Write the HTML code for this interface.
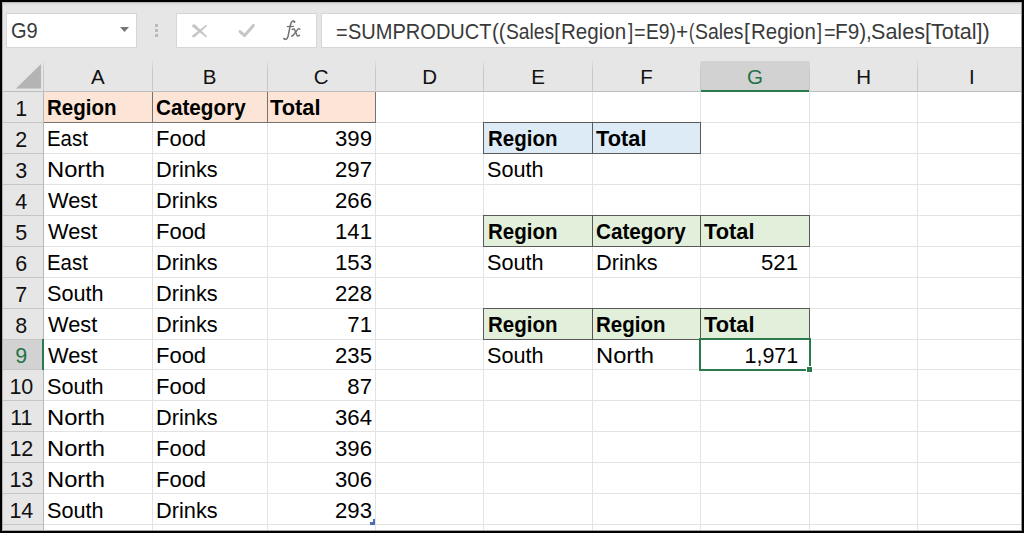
<!DOCTYPE html>
<html><head><meta charset="utf-8"><style>
html,body{margin:0;padding:0;}
body{width:1024px;height:533px;background:#000;position:relative;overflow:hidden;font-family:"Liberation Sans",sans-serif;}
.r{position:absolute;}
.t{position:absolute;white-space:nowrap;}
</style></head><body>
<div class="r" style="left:2.00px;top:2.00px;width:1020.00px;height:528.50px;background:#ffffff;"></div>
<div class="r" style="left:2.00px;top:2.00px;width:1020.00px;height:59.00px;background:#e6e6e6;"></div>
<div class="r" style="left:2.00px;top:3.00px;width:1020.00px;height:1.00px;background:#d9d9d9;"></div>
<div class="r" style="left:2.00px;top:4.00px;width:1020.00px;height:2.00px;background:#e1e1e1;"></div>
<div class="r" style="left:6.00px;top:13.00px;width:131.00px;height:34.50px;background:#ffffff;box-shadow:inset 0 0 0 1px #d6d6d6;"></div>
<div class="t" style="left:11.30px;top:16.38px;font-size:22px;line-height:30px;color:#3a3a3a;transform:scaleX(0.91);transform-origin:0 0;">G9</div>
<svg class="r" style="left:118px;top:25px" width="14" height="9"><polygon points="2,2 11,2 6.5,7" fill="#767676"/></svg>
<div class="r" style="left:155.00px;top:24.00px;width:2.50px;height:2.50px;background:#bababa;"></div>
<div class="r" style="left:155.00px;top:29.00px;width:2.50px;height:2.50px;background:#bababa;"></div>
<div class="r" style="left:155.00px;top:34.00px;width:2.50px;height:2.50px;background:#bababa;"></div>
<div class="r" style="left:176.00px;top:13.00px;width:140.50px;height:34.50px;background:#ffffff;box-shadow:inset 0 0 0 1px #d6d6d6;"></div>
<svg class="r" style="left:190px;top:22px" width="20" height="18"><path d="M1.8,4.2 Q2.8,1.6 5.0,2.6 L17.0,14.2 Q17.0,15.4 15.8,15.2 Z" fill="#c6c6c6"/><path d="M15.8,2.9 Q17.0,2.8 17.0,4.0 L5.2,14.8 Q2.6,16.4 1.9,13.8 Z" fill="#c6c6c6"/></svg>
<svg class="r" style="left:236px;top:22px" width="22" height="18"><path d="M4,9.6 L8.6,13.6 L17.4,3.4" stroke="#c6c6c6" stroke-width="3" stroke-linecap="round" stroke-linejoin="round" fill="none"/></svg>
<svg class="r" style="left:276px;top:16px" width="30" height="28"><g fill="none" stroke="#6e6e6e" stroke-linecap="round"><path d="M18.6,6.0 C18.3,5.0 17.3,4.8 16.5,5.2 C15.3,5.8 14.8,7.4 14.4,9.2 L12.0,20.4 C11.5,22.5 10.6,23.4 9.4,23.4 C8.7,23.4 8.3,23.1 8.1,22.7" stroke-width="1.5"/><path d="M11.3,10.6 L17.4,10.4" stroke-width="1.2"/><path d="M16.2,13.4 C17.3,12.6 18.4,12.9 19.0,14.4 L20.8,19.0 C21.3,20.2 22.3,20.4 23.5,19.3" stroke-width="1.4"/><path d="M23.9,13.2 C23.4,12.4 22.5,12.5 21.8,13.3 L17.4,19.0 C16.8,19.8 16.1,20.3 15.5,19.9" stroke-width="1.3"/></g><circle cx="18.4" cy="5.9" r="0.9" fill="#6e6e6e"/><circle cx="8.2" cy="22.6" r="0.9" fill="#6e6e6e"/></svg>
<div class="r" style="left:320.50px;top:13.00px;width:701.50px;height:34.50px;background:#ffffff;box-sizing:border-box;border:1px solid #d6d6d6;border-right:none;"></div>
<div class="t" style="left:336.19px;top:18.25px;font-size:21.8px;line-height:30px;color:#3a3a3a;transform:scaleX(0.9091);transform-origin:0 0;">=</div>
<div class="t" style="left:347.68px;top:17.25px;font-size:21.8px;line-height:30px;color:#3a3a3a;transform:scaleX(0.9187);transform-origin:0 0;">SUMPRODUCT</div>
<div class="t" style="left:491.97px;top:17.25px;font-size:21.8px;line-height:30px;color:#3a3a3a;transform:scaleX(0.9308);transform-origin:0 0;">((</div>
<div class="t" style="left:505.72px;top:17.25px;font-size:21.8px;line-height:30px;color:#3a3a3a;transform:scaleX(0.8830);transform-origin:0 0;">Sales</div>
<div class="t" style="left:554.15px;top:17.25px;font-size:21.8px;line-height:30px;color:#3a3a3a;transform:scaleX(0.9750);transform-origin:0 0;">[</div>
<div class="t" style="left:561.01px;top:17.25px;font-size:21.8px;line-height:30px;color:#3a3a3a;transform:scaleX(0.9439);transform-origin:0 0;">Region</div>
<div class="t" style="left:627.60px;top:17.25px;font-size:21.8px;line-height:30px;color:#3a3a3a;transform:scaleX(0.8600);transform-origin:0 0;">]</div>
<div class="t" style="left:633.99px;top:18.25px;font-size:21.8px;line-height:30px;color:#3a3a3a;transform:scaleX(0.9091);transform-origin:0 0;">=</div>
<div class="t" style="left:645.84px;top:17.25px;font-size:21.8px;line-height:30px;color:#3a3a3a;transform:scaleX(0.8806);transform-origin:0 0;">E9)</div>
<div class="t" style="left:676.15px;top:17.25px;font-size:21.8px;line-height:30px;color:#3a3a3a;transform:scaleX(0.9545);transform-origin:0 0;">+</div>
<div class="t" style="left:689.07px;top:17.25px;font-size:21.8px;line-height:30px;color:#3a3a3a;transform:scaleX(0.7333);transform-origin:0 0;">(</div>
<div class="t" style="left:695.31px;top:17.25px;font-size:21.8px;line-height:30px;color:#3a3a3a;transform:scaleX(0.8906);transform-origin:0 0;">Sales</div>
<div class="t" style="left:743.95px;top:17.25px;font-size:21.8px;line-height:30px;color:#3a3a3a;transform:scaleX(0.9750);transform-origin:0 0;">[</div>
<div class="t" style="left:750.82px;top:17.25px;font-size:21.8px;line-height:30px;color:#3a3a3a;transform:scaleX(0.9379);transform-origin:0 0;">Region</div>
<div class="t" style="left:817.40px;top:17.25px;font-size:21.8px;line-height:30px;color:#3a3a3a;transform:scaleX(0.8200);transform-origin:0 0;">]</div>
<div class="t" style="left:823.99px;top:18.25px;font-size:21.8px;line-height:30px;color:#3a3a3a;transform:scaleX(0.9091);transform-origin:0 0;">=</div>
<div class="t" style="left:835.20px;top:17.25px;font-size:21.8px;line-height:30px;color:#3a3a3a;transform:scaleX(0.9514);transform-origin:0 0;">F9),</div>
<div class="t" style="left:871.31px;top:17.25px;font-size:21.8px;line-height:30px;color:#3a3a3a;transform:scaleX(0.9890);transform-origin:0 0;">Sales[Total])</div>
<div class="r" style="left:2.00px;top:61.00px;width:1020.00px;height:30.50px;background:#e6e6e6;"></div>
<div class="r" style="left:2.00px;top:91.50px;width:41.50px;height:439.00px;background:#e6e6e6;"></div>
<div class="r" style="left:700.70px;top:61.00px;width:108.80px;height:30.50px;background:#d2d2d2;"></div>
<div class="r" style="left:2.00px;top:339.02px;width:41.50px;height:30.94px;background:#d2d2d2;"></div>
<svg class="r" style="left:0;top:0" width="60" height="100"><polygon points="16,88.5 41,64 41,88.5" fill="#b4b4b4"/></svg>
<div class="r" style="left:43.50px;top:91.50px;width:332.00px;height:30.94px;background:#fce4d6;"></div>
<div class="r" style="left:483.70px;top:122.44px;width:217.00px;height:30.94px;background:#ddebf7;"></div>
<div class="r" style="left:483.70px;top:215.26px;width:325.80px;height:30.94px;background:#e2efda;"></div>
<div class="r" style="left:483.70px;top:308.08px;width:325.80px;height:30.94px;background:#e2efda;"></div>
<div class="r" style="left:44.00px;top:121.94px;width:978.00px;height:1.00px;background:#e3e3e3;"></div>
<div class="r" style="left:44.00px;top:152.88px;width:978.00px;height:1.00px;background:#e3e3e3;"></div>
<div class="r" style="left:44.00px;top:183.82px;width:978.00px;height:1.00px;background:#e3e3e3;"></div>
<div class="r" style="left:44.00px;top:214.76px;width:978.00px;height:1.00px;background:#e3e3e3;"></div>
<div class="r" style="left:44.00px;top:245.70px;width:978.00px;height:1.00px;background:#e3e3e3;"></div>
<div class="r" style="left:44.00px;top:276.64px;width:978.00px;height:1.00px;background:#e3e3e3;"></div>
<div class="r" style="left:44.00px;top:307.58px;width:978.00px;height:1.00px;background:#e3e3e3;"></div>
<div class="r" style="left:44.00px;top:338.52px;width:978.00px;height:1.00px;background:#e3e3e3;"></div>
<div class="r" style="left:44.00px;top:369.46px;width:978.00px;height:1.00px;background:#e3e3e3;"></div>
<div class="r" style="left:44.00px;top:400.40px;width:978.00px;height:1.00px;background:#e3e3e3;"></div>
<div class="r" style="left:44.00px;top:431.34px;width:978.00px;height:1.00px;background:#e3e3e3;"></div>
<div class="r" style="left:44.00px;top:462.28px;width:978.00px;height:1.00px;background:#e3e3e3;"></div>
<div class="r" style="left:44.00px;top:493.22px;width:978.00px;height:1.00px;background:#e3e3e3;"></div>
<div class="r" style="left:44.00px;top:524.16px;width:978.00px;height:1.00px;background:#e3e3e3;"></div>
<div class="r" style="left:151.70px;top:91.50px;width:1.00px;height:439.00px;background:#e3e3e3;"></div>
<div class="r" style="left:266.50px;top:91.50px;width:1.00px;height:439.00px;background:#e3e3e3;"></div>
<div class="r" style="left:375.00px;top:91.50px;width:1.00px;height:439.00px;background:#e3e3e3;"></div>
<div class="r" style="left:483.20px;top:91.50px;width:1.00px;height:439.00px;background:#e3e3e3;"></div>
<div class="r" style="left:592.00px;top:91.50px;width:1.00px;height:439.00px;background:#e3e3e3;"></div>
<div class="r" style="left:700.20px;top:91.50px;width:1.00px;height:439.00px;background:#e3e3e3;"></div>
<div class="r" style="left:809.00px;top:91.50px;width:1.00px;height:439.00px;background:#e3e3e3;"></div>
<div class="r" style="left:917.10px;top:91.50px;width:1.00px;height:439.00px;background:#e3e3e3;"></div>
<div class="r" style="left:2.00px;top:121.94px;width:41.50px;height:1.00px;background:#c6c6c6;"></div>
<div class="r" style="left:2.00px;top:152.88px;width:41.50px;height:1.00px;background:#c6c6c6;"></div>
<div class="r" style="left:2.00px;top:183.82px;width:41.50px;height:1.00px;background:#c6c6c6;"></div>
<div class="r" style="left:2.00px;top:214.76px;width:41.50px;height:1.00px;background:#c6c6c6;"></div>
<div class="r" style="left:2.00px;top:245.70px;width:41.50px;height:1.00px;background:#c6c6c6;"></div>
<div class="r" style="left:2.00px;top:276.64px;width:41.50px;height:1.00px;background:#c6c6c6;"></div>
<div class="r" style="left:2.00px;top:307.58px;width:41.50px;height:1.00px;background:#c6c6c6;"></div>
<div class="r" style="left:2.00px;top:338.52px;width:41.50px;height:1.00px;background:#c6c6c6;"></div>
<div class="r" style="left:2.00px;top:369.46px;width:41.50px;height:1.00px;background:#c6c6c6;"></div>
<div class="r" style="left:2.00px;top:400.40px;width:41.50px;height:1.00px;background:#c6c6c6;"></div>
<div class="r" style="left:2.00px;top:431.34px;width:41.50px;height:1.00px;background:#c6c6c6;"></div>
<div class="r" style="left:2.00px;top:462.28px;width:41.50px;height:1.00px;background:#c6c6c6;"></div>
<div class="r" style="left:2.00px;top:493.22px;width:41.50px;height:1.00px;background:#c6c6c6;"></div>
<div class="r" style="left:2.00px;top:524.16px;width:41.50px;height:1.00px;background:#c6c6c6;"></div>
<div class="r" style="left:2.00px;top:91.00px;width:1020.00px;height:1.00px;background:#bdbdbd;"></div>
<div class="r" style="left:43.00px;top:61.00px;width:1.00px;height:30.50px;background:linear-gradient(rgba(200,200,200,0.3),#c8c8c8 35%);"></div>
<div class="r" style="left:151.70px;top:61.00px;width:1.00px;height:30.50px;background:linear-gradient(rgba(200,200,200,0.3),#c8c8c8 35%);"></div>
<div class="r" style="left:266.50px;top:61.00px;width:1.00px;height:30.50px;background:linear-gradient(rgba(200,200,200,0.3),#c8c8c8 35%);"></div>
<div class="r" style="left:375.00px;top:61.00px;width:1.00px;height:30.50px;background:linear-gradient(rgba(200,200,200,0.3),#c8c8c8 35%);"></div>
<div class="r" style="left:483.20px;top:61.00px;width:1.00px;height:30.50px;background:linear-gradient(rgba(200,200,200,0.3),#c8c8c8 35%);"></div>
<div class="r" style="left:592.00px;top:61.00px;width:1.00px;height:30.50px;background:linear-gradient(rgba(200,200,200,0.3),#c8c8c8 35%);"></div>
<div class="r" style="left:700.20px;top:61.00px;width:1.00px;height:30.50px;background:linear-gradient(rgba(200,200,200,0.3),#c8c8c8 35%);"></div>
<div class="r" style="left:809.00px;top:61.00px;width:1.00px;height:30.50px;background:linear-gradient(rgba(200,200,200,0.3),#c8c8c8 35%);"></div>
<div class="r" style="left:917.10px;top:61.00px;width:1.00px;height:30.50px;background:linear-gradient(rgba(200,200,200,0.3),#c8c8c8 35%);"></div>
<div class="r" style="left:43.00px;top:91.50px;width:1.00px;height:439.00px;background:#b8b8b8;"></div>
<div class="r" style="left:700.70px;top:90.30px;width:108.80px;height:2.00px;background:#2a7a4b;"></div>
<div class="r" style="left:42.00px;top:339.02px;width:2.00px;height:30.94px;background:#2a7a4b;"></div>
<div class="r" style="left:44.00px;top:121.94px;width:332.00px;height:1.00px;background:#767171;"></div>
<div class="r" style="left:151.70px;top:91.50px;width:1.00px;height:30.94px;background:#767171;"></div>
<div class="r" style="left:266.50px;top:91.50px;width:1.00px;height:30.94px;background:#767171;"></div>
<div class="r" style="left:375.00px;top:91.50px;width:1.00px;height:30.94px;background:#767171;"></div>
<div class="r" style="left:483.20px;top:121.94px;width:218.00px;height:1.00px;background:#595959;"></div>
<div class="r" style="left:483.20px;top:152.88px;width:218.00px;height:1.00px;background:#595959;"></div>
<div class="r" style="left:483.20px;top:122.44px;width:1.00px;height:30.94px;background:#595959;"></div>
<div class="r" style="left:592.00px;top:122.44px;width:1.00px;height:30.94px;background:#595959;"></div>
<div class="r" style="left:700.20px;top:122.44px;width:1.00px;height:30.94px;background:#595959;"></div>
<div class="r" style="left:483.20px;top:214.76px;width:326.80px;height:1.00px;background:#595959;"></div>
<div class="r" style="left:483.20px;top:245.70px;width:326.80px;height:1.00px;background:#595959;"></div>
<div class="r" style="left:483.20px;top:215.26px;width:1.00px;height:30.94px;background:#595959;"></div>
<div class="r" style="left:592.00px;top:215.26px;width:1.00px;height:30.94px;background:#595959;"></div>
<div class="r" style="left:700.20px;top:215.26px;width:1.00px;height:30.94px;background:#595959;"></div>
<div class="r" style="left:809.00px;top:215.26px;width:1.00px;height:30.94px;background:#595959;"></div>
<div class="r" style="left:483.20px;top:307.58px;width:326.80px;height:1.00px;background:#595959;"></div>
<div class="r" style="left:483.20px;top:338.52px;width:326.80px;height:1.00px;background:#595959;"></div>
<div class="r" style="left:483.20px;top:308.08px;width:1.00px;height:30.94px;background:#595959;"></div>
<div class="r" style="left:592.00px;top:308.08px;width:1.00px;height:30.94px;background:#595959;"></div>
<div class="r" style="left:700.20px;top:308.08px;width:1.00px;height:30.94px;background:#595959;"></div>
<div class="r" style="left:809.00px;top:308.08px;width:1.00px;height:30.94px;background:#595959;"></div>
<div class="t" style="left:43.50px;top:61.90px;font-size:20.5px;line-height:30px;color:#111111;width:108.70px;text-align:center;">A</div>
<div class="t" style="left:152.20px;top:61.90px;font-size:20.5px;line-height:30px;color:#111111;width:114.80px;text-align:center;">B</div>
<div class="t" style="left:267.00px;top:61.90px;font-size:20.5px;line-height:30px;color:#111111;width:108.50px;text-align:center;">C</div>
<div class="t" style="left:375.50px;top:61.90px;font-size:20.5px;line-height:30px;color:#111111;width:108.20px;text-align:center;">D</div>
<div class="t" style="left:483.70px;top:61.90px;font-size:20.5px;line-height:30px;color:#111111;width:108.80px;text-align:center;">E</div>
<div class="t" style="left:592.50px;top:61.90px;font-size:20.5px;line-height:30px;color:#111111;width:108.20px;text-align:center;">F</div>
<div class="t" style="left:700.70px;top:61.90px;font-size:20.5px;line-height:30px;color:#217346;width:108.80px;text-align:center;">G</div>
<div class="t" style="left:809.50px;top:61.90px;font-size:20.5px;line-height:30px;color:#111111;width:108.10px;text-align:center;">H</div>
<div class="t" style="left:917.60px;top:61.90px;font-size:20.5px;line-height:30px;color:#111111;width:108.60px;text-align:center;">I</div>
<div class="t" style="left:0.60px;top:93.95px;font-size:21.5px;line-height:30px;color:#111111;width:41.50px;text-align:center;">1</div>
<div class="t" style="left:0.60px;top:124.89px;font-size:21.5px;line-height:30px;color:#111111;width:41.50px;text-align:center;">2</div>
<div class="t" style="left:0.60px;top:155.83px;font-size:21.5px;line-height:30px;color:#111111;width:41.50px;text-align:center;">3</div>
<div class="t" style="left:0.60px;top:186.77px;font-size:21.5px;line-height:30px;color:#111111;width:41.50px;text-align:center;">4</div>
<div class="t" style="left:0.60px;top:217.71px;font-size:21.5px;line-height:30px;color:#111111;width:41.50px;text-align:center;">5</div>
<div class="t" style="left:0.60px;top:248.65px;font-size:21.5px;line-height:30px;color:#111111;width:41.50px;text-align:center;">6</div>
<div class="t" style="left:0.60px;top:279.59px;font-size:21.5px;line-height:30px;color:#111111;width:41.50px;text-align:center;">7</div>
<div class="t" style="left:0.60px;top:310.53px;font-size:21.5px;line-height:30px;color:#111111;width:41.50px;text-align:center;">8</div>
<div class="t" style="left:0.60px;top:341.47px;font-size:21.5px;line-height:30px;color:#217346;width:41.50px;text-align:center;">9</div>
<div class="t" style="left:0.60px;top:372.41px;font-size:21.5px;line-height:30px;color:#111111;width:41.50px;text-align:center;">10</div>
<div class="t" style="left:0.60px;top:403.35px;font-size:21.5px;line-height:30px;color:#111111;width:41.50px;text-align:center;">11</div>
<div class="t" style="left:0.60px;top:434.29px;font-size:21.5px;line-height:30px;color:#111111;width:41.50px;text-align:center;">12</div>
<div class="t" style="left:0.60px;top:465.23px;font-size:21.5px;line-height:30px;color:#111111;width:41.50px;text-align:center;">13</div>
<div class="t" style="left:0.60px;top:496.17px;font-size:21.5px;line-height:30px;color:#111111;width:41.50px;text-align:center;">14</div>
<div class="t" style="left:47.32px;top:93.47px;font-size:21.6px;line-height:30px;color:#000;font-weight:bold;transform:scaleX(0.9497);transform-origin:0 0;">Region</div>
<div class="t" style="left:156.01px;top:93.47px;font-size:21.6px;line-height:30px;color:#000;font-weight:bold;transform:scaleX(0.9582);transform-origin:0 0;">Category</div>
<div class="t" style="left:270.40px;top:93.47px;font-size:21.6px;line-height:30px;color:#000;font-weight:bold;transform:scaleX(1.0095);transform-origin:0 0;">Total</div>
<div class="t" style="left:47.16px;top:124.41px;font-size:21.6px;line-height:30px;color:#000;transform:scaleX(0.9455);transform-origin:0 0;">East</div>
<div class="t" style="left:155.71px;top:124.41px;font-size:21.6px;line-height:30px;color:#000;transform:scaleX(1.0176);transform-origin:0 0;">Food</div>
<div class="t" style="left:172.10px;top:124.44px;font-size:21.5px;line-height:30px;color:#000;width:200.00px;text-align:right;transform:scaleX(1.03);transform-origin:100% 0;">399</div>
<div class="t" style="left:46.84px;top:155.35px;font-size:21.6px;line-height:30px;color:#000;transform:scaleX(1.0998);transform-origin:0 0;">North</div>
<div class="t" style="left:155.73px;top:155.35px;font-size:21.6px;line-height:30px;color:#000;transform:scaleX(1.0080);transform-origin:0 0;">Drinks</div>
<div class="t" style="left:172.10px;top:155.38px;font-size:21.5px;line-height:30px;color:#000;width:200.00px;text-align:right;transform:scaleX(1.03);transform-origin:100% 0;">297</div>
<div class="t" style="left:48.10px;top:186.29px;font-size:21.6px;line-height:30px;color:#000;transform:scaleX(1.0095);transform-origin:0 0;">West</div>
<div class="t" style="left:155.73px;top:186.29px;font-size:21.6px;line-height:30px;color:#000;transform:scaleX(1.0080);transform-origin:0 0;">Drinks</div>
<div class="t" style="left:172.10px;top:186.32px;font-size:21.5px;line-height:30px;color:#000;width:200.00px;text-align:right;transform:scaleX(1.03);transform-origin:100% 0;">266</div>
<div class="t" style="left:48.10px;top:217.23px;font-size:21.6px;line-height:30px;color:#000;transform:scaleX(1.0095);transform-origin:0 0;">West</div>
<div class="t" style="left:155.71px;top:217.23px;font-size:21.6px;line-height:30px;color:#000;transform:scaleX(1.0176);transform-origin:0 0;">Food</div>
<div class="t" style="left:172.10px;top:217.26px;font-size:21.5px;line-height:30px;color:#000;width:200.00px;text-align:right;transform:scaleX(1.03);transform-origin:100% 0;">141</div>
<div class="t" style="left:47.16px;top:248.17px;font-size:21.6px;line-height:30px;color:#000;transform:scaleX(0.9455);transform-origin:0 0;">East</div>
<div class="t" style="left:155.73px;top:248.17px;font-size:21.6px;line-height:30px;color:#000;transform:scaleX(1.0080);transform-origin:0 0;">Drinks</div>
<div class="t" style="left:172.10px;top:248.20px;font-size:21.5px;line-height:30px;color:#000;width:200.00px;text-align:right;transform:scaleX(1.03);transform-origin:100% 0;">153</div>
<div class="t" style="left:46.77px;top:279.11px;font-size:21.6px;line-height:30px;color:#000;transform:scaleX(1.0034);transform-origin:0 0;">South</div>
<div class="t" style="left:155.73px;top:279.11px;font-size:21.6px;line-height:30px;color:#000;transform:scaleX(1.0080);transform-origin:0 0;">Drinks</div>
<div class="t" style="left:172.10px;top:279.14px;font-size:21.5px;line-height:30px;color:#000;width:200.00px;text-align:right;transform:scaleX(1.03);transform-origin:100% 0;">228</div>
<div class="t" style="left:48.10px;top:310.05px;font-size:21.6px;line-height:30px;color:#000;transform:scaleX(1.0095);transform-origin:0 0;">West</div>
<div class="t" style="left:155.73px;top:310.05px;font-size:21.6px;line-height:30px;color:#000;transform:scaleX(1.0080);transform-origin:0 0;">Drinks</div>
<div class="t" style="left:172.10px;top:310.08px;font-size:21.5px;line-height:30px;color:#000;width:200.00px;text-align:right;transform:scaleX(1.03);transform-origin:100% 0;">71</div>
<div class="t" style="left:48.10px;top:340.99px;font-size:21.6px;line-height:30px;color:#000;transform:scaleX(1.0095);transform-origin:0 0;">West</div>
<div class="t" style="left:155.71px;top:340.99px;font-size:21.6px;line-height:30px;color:#000;transform:scaleX(1.0176);transform-origin:0 0;">Food</div>
<div class="t" style="left:172.10px;top:341.02px;font-size:21.5px;line-height:30px;color:#000;width:200.00px;text-align:right;transform:scaleX(1.03);transform-origin:100% 0;">235</div>
<div class="t" style="left:46.77px;top:371.93px;font-size:21.6px;line-height:30px;color:#000;transform:scaleX(1.0034);transform-origin:0 0;">South</div>
<div class="t" style="left:155.71px;top:371.93px;font-size:21.6px;line-height:30px;color:#000;transform:scaleX(1.0176);transform-origin:0 0;">Food</div>
<div class="t" style="left:172.10px;top:371.96px;font-size:21.5px;line-height:30px;color:#000;width:200.00px;text-align:right;transform:scaleX(1.03);transform-origin:100% 0;">87</div>
<div class="t" style="left:46.84px;top:402.87px;font-size:21.6px;line-height:30px;color:#000;transform:scaleX(1.0998);transform-origin:0 0;">North</div>
<div class="t" style="left:155.73px;top:402.87px;font-size:21.6px;line-height:30px;color:#000;transform:scaleX(1.0080);transform-origin:0 0;">Drinks</div>
<div class="t" style="left:172.10px;top:402.90px;font-size:21.5px;line-height:30px;color:#000;width:200.00px;text-align:right;transform:scaleX(1.03);transform-origin:100% 0;">364</div>
<div class="t" style="left:46.84px;top:433.81px;font-size:21.6px;line-height:30px;color:#000;transform:scaleX(1.0998);transform-origin:0 0;">North</div>
<div class="t" style="left:155.71px;top:433.81px;font-size:21.6px;line-height:30px;color:#000;transform:scaleX(1.0176);transform-origin:0 0;">Food</div>
<div class="t" style="left:172.10px;top:433.84px;font-size:21.5px;line-height:30px;color:#000;width:200.00px;text-align:right;transform:scaleX(1.03);transform-origin:100% 0;">396</div>
<div class="t" style="left:46.84px;top:464.75px;font-size:21.6px;line-height:30px;color:#000;transform:scaleX(1.0998);transform-origin:0 0;">North</div>
<div class="t" style="left:155.71px;top:464.75px;font-size:21.6px;line-height:30px;color:#000;transform:scaleX(1.0176);transform-origin:0 0;">Food</div>
<div class="t" style="left:172.10px;top:464.78px;font-size:21.5px;line-height:30px;color:#000;width:200.00px;text-align:right;transform:scaleX(1.03);transform-origin:100% 0;">306</div>
<div class="t" style="left:46.77px;top:495.69px;font-size:21.6px;line-height:30px;color:#000;transform:scaleX(1.0034);transform-origin:0 0;">South</div>
<div class="t" style="left:155.73px;top:495.69px;font-size:21.6px;line-height:30px;color:#000;transform:scaleX(1.0080);transform-origin:0 0;">Drinks</div>
<div class="t" style="left:172.10px;top:495.72px;font-size:21.5px;line-height:30px;color:#000;width:200.00px;text-align:right;transform:scaleX(1.03);transform-origin:100% 0;">293</div>
<div class="t" style="left:487.52px;top:124.41px;font-size:21.6px;line-height:30px;color:#000;font-weight:bold;transform:scaleX(0.9497);transform-origin:0 0;">Region</div>
<div class="t" style="left:595.90px;top:124.41px;font-size:21.6px;line-height:30px;color:#000;font-weight:bold;transform:scaleX(1.0095);transform-origin:0 0;">Total</div>
<div class="t" style="left:486.97px;top:155.35px;font-size:21.6px;line-height:30px;color:#000;transform:scaleX(1.0034);transform-origin:0 0;">South</div>
<div class="t" style="left:487.52px;top:217.23px;font-size:21.6px;line-height:30px;color:#000;font-weight:bold;transform:scaleX(0.9497);transform-origin:0 0;">Region</div>
<div class="t" style="left:596.31px;top:217.23px;font-size:21.6px;line-height:30px;color:#000;font-weight:bold;transform:scaleX(0.9582);transform-origin:0 0;">Category</div>
<div class="t" style="left:704.10px;top:217.23px;font-size:21.6px;line-height:30px;color:#000;font-weight:bold;transform:scaleX(1.0095);transform-origin:0 0;">Total</div>
<div class="t" style="left:486.97px;top:248.17px;font-size:21.6px;line-height:30px;color:#000;transform:scaleX(1.0034);transform-origin:0 0;">South</div>
<div class="t" style="left:596.03px;top:248.17px;font-size:21.6px;line-height:30px;color:#000;transform:scaleX(1.0080);transform-origin:0 0;">Drinks</div>
<div class="t" style="left:598.30px;top:248.20px;font-size:21.5px;line-height:30px;color:#000;width:200.00px;text-align:right;transform:scaleX(1.03);transform-origin:100% 0;">521</div>
<div class="t" style="left:487.52px;top:310.05px;font-size:21.6px;line-height:30px;color:#000;font-weight:bold;transform:scaleX(0.9497);transform-origin:0 0;">Region</div>
<div class="t" style="left:596.32px;top:310.05px;font-size:21.6px;line-height:30px;color:#000;font-weight:bold;transform:scaleX(0.9497);transform-origin:0 0;">Region</div>
<div class="t" style="left:704.10px;top:310.05px;font-size:21.6px;line-height:30px;color:#000;font-weight:bold;transform:scaleX(1.0095);transform-origin:0 0;">Total</div>
<div class="t" style="left:486.97px;top:340.99px;font-size:21.6px;line-height:30px;color:#000;transform:scaleX(1.0034);transform-origin:0 0;">South</div>
<div class="t" style="left:595.84px;top:340.99px;font-size:21.6px;line-height:30px;color:#000;transform:scaleX(1.0998);transform-origin:0 0;">North</div>
<div class="t" style="left:598.30px;top:341.02px;font-size:21.5px;line-height:30px;color:#000;width:200.00px;text-align:right;transform:scaleX(1.0);transform-origin:100% 0;">1,971</div>
<div class="r" style="left:699.20px;top:337.52px;width:111.80px;height:33.94px;box-sizing:border-box;border:2px solid #2b7a4b;"></div>
<div class="r" style="left:806.50px;top:366.96px;width:5.50px;height:5.50px;background:#2b7a4b;box-shadow:0 0 0 1px #fff;"></div>
<div class="r" style="left:372.50px;top:519.00px;width:2.70px;height:2.50px;background:#4a6fb5;"></div>
<div class="r" style="left:369.80px;top:521.50px;width:5.40px;height:3.00px;background:#4a6fb5;"></div>
<div class="r" style="left:1021.00px;top:2.00px;width:1.00px;height:529.00px;background:#9a9a9a;"></div>
<div class="r" style="left:2.00px;top:530.00px;width:1019.00px;height:1.00px;background:#a8a8a8;"></div>
<div class="r" style="left:2.00px;top:2.00px;width:1.00px;height:528.00px;background:#b0b0b0;"></div>
<div class="r" style="left:2.00px;top:2.00px;width:1019.00px;height:1.00px;background:#b8b8b8;"></div>
</body></html>
